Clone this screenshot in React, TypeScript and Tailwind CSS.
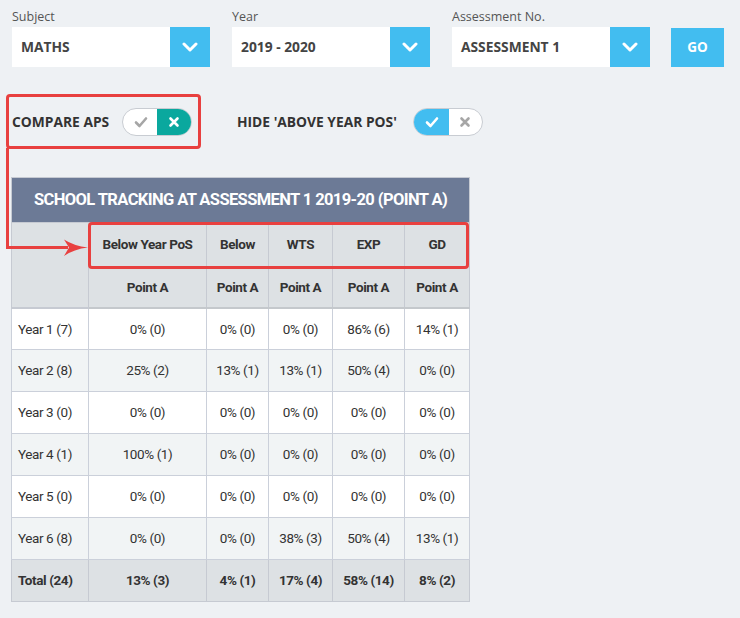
import React from "react";

const Chevron = () => (
  <svg width="16" height="10" viewBox="0 0 16 10" fill="none">
    <polyline points="2,2 8,8 14,2" stroke="white" strokeWidth="3" strokeLinecap="round" strokeLinejoin="round" />
  </svg>
);

const Check = ({ color }: { color: string }) => (
  <svg width="14" height="12" viewBox="0 0 14 12" fill="none">
    <polyline points="2,6.5 5.5,10 12,2.5" stroke={color} strokeWidth="2.6" strokeLinecap="round" strokeLinejoin="round" />
  </svg>
);

const Cross = ({ color }: { color: string }) => (
  <svg width="12" height="12" viewBox="0 0 12 12" fill="none">
    <path d="M2.5 2.5 L9.5 9.5 M9.5 2.5 L2.5 9.5" stroke={color} strokeWidth="2.6" strokeLinecap="round" />
  </svg>
);

function Select({ label, value }: { label: string; value: string }) {
  return (
    <div className="flex flex-col w-[198px]">
      <div className="text-[12.5px] leading-[16px] text-[#555] h-[17px] mt-[9px]">{label}</div>
      <div className="flex h-[40px] mt-[1px]">
        <div className="flex-1 bg-white flex items-center pl-[9px] text-[13.8px] font-bold text-[#444]">{value}</div>
        <div className="w-[40px] bg-[#42bdf0] flex items-center justify-center">
          <Chevron />
        </div>
      </div>
    </div>
  );
}

const rows = [
  ["Year 1 (7)", "0% (0)", "0% (0)", "0% (0)", "86% (6)", "14% (1)"],
  ["Year 2 (8)", "25% (2)", "13% (1)", "13% (1)", "50% (4)", "0% (0)"],
  ["Year 3 (0)", "0% (0)", "0% (0)", "0% (0)", "0% (0)", "0% (0)"],
  ["Year 4 (1)", "100% (1)", "0% (0)", "0% (0)", "0% (0)", "0% (0)"],
  ["Year 5 (0)", "0% (0)", "0% (0)", "0% (0)", "0% (0)", "0% (0)"],
  ["Year 6 (8)", "0% (0)", "0% (0)", "38% (3)", "50% (4)", "13% (1)"],
];
const total = ["Total (24)", "13% (3)", "4% (1)", "17% (4)", "58% (14)", "8% (2)"];

export default function App() {
  return (
    <div
      className="relative w-[740px] h-[618px] bg-[#eef1f4] overflow-hidden"
      style={{ fontFamily: "'Open Sans', 'Liberation Sans', sans-serif" }}
    >
      <div className="flex items-start pl-[12px]">
        <Select label="Subject" value="MATHS" />
        <div className="w-[22px]" />
        <Select label="Year" value="2019 - 2020" />
        <div className="w-[22px]" />
        <Select label="Assessment No." value="ASSESSMENT 1" />
        <div className="w-[21px]" />
        <div className="mt-[28px] w-[53px] h-[39px] bg-[#42bdf0] text-white font-bold text-[13.5px] flex items-center justify-center">
          GO
        </div>
      </div>

      <div className="flex items-center pl-[12px] mt-[41px] h-[28px]">
        <span className="w-[100px] whitespace-nowrap text-[13.8px] font-bold text-[#333]">COMPARE APS</span>
        <div className="ml-[10px] w-[70px] h-[28px] rounded-full border border-[#c8ccd2] bg-white flex overflow-hidden">
          <div className="w-[34px] flex items-center justify-center pl-[2px]">
            <Check color="#a6a6a6" />
          </div>
          <div className="flex-1 bg-[#0aa89e] flex items-center justify-center">
            <Cross color="white" />
          </div>
        </div>
        <span className="ml-[45px] w-[166px] whitespace-nowrap text-[13.8px] font-bold text-[#333]">HIDE 'ABOVE YEAR POS'</span>
        <div className="ml-[10px] w-[70px] h-[28px] rounded-full border border-[#c8ccd2] bg-white flex overflow-hidden">
          <div className="w-[35px] bg-[#42bdf0] flex items-center justify-center">
            <Check color="white" />
          </div>
          <div className="flex-1 flex items-center justify-center pr-[2px]">
            <Cross color="#a6a6a6" />
          </div>
        </div>
      </div>

      <div className="ml-[11px] mt-[41px] w-[458px]" style={{ fontFamily: "Roboto, 'Liberation Sans', sans-serif" }}>
        <table className="border-collapse w-[458px] table-fixed text-[#333] text-[13.5px] tracking-[-0.4px]">
          <colgroup>
            <col className="w-[77px]" />
            <col className="w-[118px]" />
            <col className="w-[62px]" />
            <col className="w-[64px]" />
            <col className="w-[72px]" />
            <col className="w-[65px]" />
          </colgroup>
          <thead>
            <tr>
              <th colSpan={6} className="h-[45px] bg-[#6c7a96] text-white text-[16.5px] font-bold tracking-[-0.6px] border border-[#c6cad2] text-center">
                SCHOOL TRACKING AT ASSESSMENT 1 2019-20 (POINT A)
              </th>
            </tr>
            <tr className="bg-[#dde1e4] h-[44px]">
              <th rowSpan={2} className="border border-[#c6cad2] border-b-2"></th>
              <th className="border border-[#c6cad2] font-bold">Below Year PoS</th>
              <th className="border border-[#c6cad2] font-bold">Below</th>
              <th className="border border-[#c6cad2] font-bold">WTS</th>
              <th className="border border-[#c6cad2] font-bold">EXP</th>
              <th className="border border-[#c6cad2] font-bold">GD</th>
            </tr>
            <tr className="bg-[#dde1e4] h-[41px]">
              {[0, 1, 2, 3, 4].map((i) => (
                <th key={i} className="border border-[#c6cad2] border-b-2 border-b-[#c4c8cc] font-bold">
                  Point A
                </th>
              ))}
            </tr>
          </thead>
          <tbody>
            {rows.map((r, ri) => (
              <tr key={ri} className={`h-[42px] ${ri % 2 === 0 ? "bg-white" : "bg-[#f1f4f5]"}`}>
                {r.map((c, ci) => (
                  <td key={ci} className={`border border-[#cbd0da] ${ci === 0 ? "text-left pl-[6px]" : "text-center"}`}>
                    {c}
                  </td>
                ))}
              </tr>
            ))}
            <tr className="h-[42px] bg-[#dde1e4] font-bold">
              {total.map((c, ci) => (
                <td key={ci} className={`border border-[#c6cad2] ${ci === 0 ? "text-left pl-[6px]" : "text-center"}`}>
                  {c}
                </td>
              ))}
            </tr>
          </tbody>
        </table>
      </div>

      {/* annotations */}
      <div className="absolute left-[6px] top-[94px] w-[195px] h-[55px] border-[3px] border-[#e8403f] rounded-[4px]" />
      <div className="absolute left-[88px] top-[222px] w-[381px] h-[47px] border-[3px] border-[#e8403f] rounded-[4px]" />
      <svg className="absolute left-0 top-0" width="740" height="618" viewBox="0 0 740 618" fill="none">
        <polyline points="7.5,148 7.5,247.5 68,247.5" stroke="#e8403f" strokeWidth="3" fill="none" />
        <path d="M64 239.5 Q 74 246 88 247.5 Q 74 249 64 256 L 69 247.5 Z" fill="#e8403f" />
      </svg>
    </div>
  );
}
